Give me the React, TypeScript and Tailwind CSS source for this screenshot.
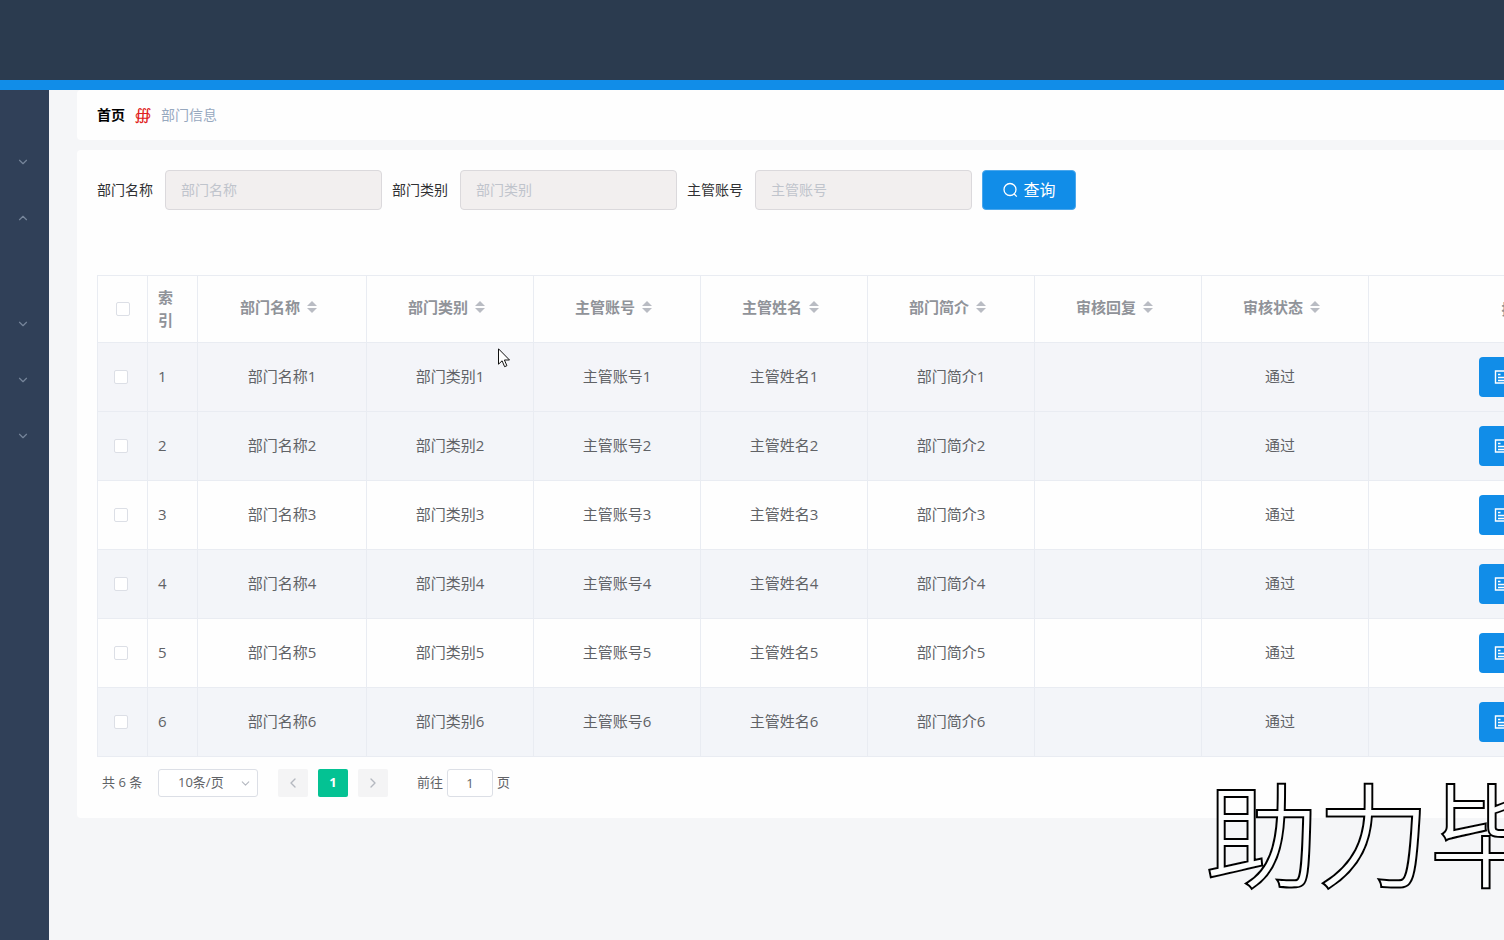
import { useState } from 'react'
import { ChevronDown, ChevronLeft, ChevronRight, ChevronUp } from 'lucide-react'

interface Department {
  id: number
  name: string
  category: string
  account: string
  manager: string
  intro: string
  reply: string
  status: string
}

const DEPARTMENTS: Department[] = [1, 2, 3, 4, 5, 6].map((n) => ({
  id: n,
  name: `部门名称${n}`,
  category: `部门类别${n}`,
  account: `主管账号${n}`,
  manager: `主管姓名${n}`,
  intro: `部门简介${n}`,
  reply: '',
  status: '通过',
}))

const COLUMNS: { key: keyof Department; label: string }[] = [
  { key: 'name',     label: '部门名称' },
  { key: 'category', label: '部门类别' },
  { key: 'account',  label: '主管账号' },
  { key: 'manager',  label: '主管姓名' },
  { key: 'intro',    label: '部门简介' },
  { key: 'reply',    label: '审核回复' },
  { key: 'status',   label: '审核状态' },
]

const FILTERS = ['部门名称', '部门类别', '主管账号']

// which sidebar groups are open; an open group shows one sub item
const MENU = [false, true, false, false, false]

const CELL = 'border-b border-r border-[#e9ecf2]'
const CHECKBOX = 'block size-[14px] appearance-none rounded-[2px] border border-[#dcdfe6] bg-white checked:bg-[#118de8]'

function SortCaret() {
  return (
    <svg className="mx-[7px] h-3 w-[10px]" viewBox="0 0 10 12" fill="#b9bcc3" aria-hidden="true">
      <path d="M5 0 10 5H0z" />
      <path d="M5 12 0 7h10z" />
    </svg>
  )
}

function SearchIcon() {
  return (
    <svg className="size-4" viewBox="0 0 16 16" fill="none" stroke="currentColor" strokeWidth="1.3" aria-hidden="true">
      <circle cx="8" cy="7.5" r="6" />
      <path d="m12.2 12 2.6 2.6" />
    </svg>
  )
}

function TicketIcon() {
  return (
    <svg className="size-[14px]" viewBox="0 0 14 14" fill="none" stroke="currentColor" strokeWidth="1.4" aria-hidden="true">
      <path d="M1.5 1h12v12h-12zM4 4.5h2.5M4 7.5h7M4 10.5h7" />
    </svg>
  )
}

function Sidebar() {
  return (
    <nav className="w-[49px] shrink-0 bg-[#304058] pt-11">
      <ul>
        {MENU.map((open, i) => (
          <li key={i}>
            <button aria-label="菜单" className="flex h-14 w-full items-center justify-end pr-[19px] text-[#76859a]">
              {open
                ? <ChevronUp className="size-[14px]" strokeWidth={2} />
                : <ChevronDown className="size-[14px]" strokeWidth={2} />}
            </button>
            {open && <div className="h-[50px]" />}
          </li>
        ))}
      </ul>
    </nav>
  )
}

function FilterBar() {
  return (
    <form className="flex items-center gap-[10px]" onSubmit={(e) => e.preventDefault()}>
      {FILTERS.map((label) => (
        <label key={label} className="flex items-center gap-3 text-sm text-[#303133]">
          {label}
          <input
            type="text"
            placeholder={label}
            className="h-10 w-[217px] rounded border border-[#dbd9dc] bg-[#f2efef] px-[15px] pb-[2px] text-sm placeholder:text-[#c0c4cc] focus:outline-none"
          />
        </label>
      ))}
      <button type="submit" className="flex h-10 w-[94px] items-center justify-center gap-[5px] rounded border border-[#4ba7ec] bg-[#118de8] text-base text-white">
        <SearchIcon />
        查询
      </button>
    </form>
  )
}

function DepartmentTable() {
  return (
    <table className="w-full table-fixed border-separate border-spacing-0 border-l border-t border-[#e9ecf2] text-[15px] leading-[23px]">
      <colgroup>
        <col className="w-[50px]" />
        <col className="w-[50px]" />
        <col className="w-[169px]" />
        {COLUMNS.slice(1).map((c) => <col key={c.key} className="w-[167px]" />)}
        <col />
      </colgroup>
      <thead className="text-[#909399]">
        <tr className="h-[67px]">
          <th className={CELL}>
            <input type="checkbox" aria-label="全选" className={`${CHECKBOX} mx-auto`} />
          </th>
          <th className={`${CELL} px-[10px] text-left`}>索引</th>
          {COLUMNS.map((c) => (
            <th key={c.key} className={`${CELL} pb-1`}>
              <span className="flex items-center justify-center">
                {c.label}
                <SortCaret />
              </span>
            </th>
          ))}
          <th className={CELL}>操作</th>
        </tr>
      </thead>
      <tbody className="text-[#606266]">
        {DEPARTMENTS.map((row) => (
          <tr key={row.id} className="h-[69px] first:bg-[#f4f5f9] even:bg-[#f3f5f9]">
            <td className={`${CELL} pl-4`}>
              <input type="checkbox" aria-label={row.name} className={CHECKBOX} />
            </td>
            <td className={`${CELL} px-[10px] pb-[2px]`}>{row.id}</td>
            {COLUMNS.map((c) => (
              <td key={c.key} className={`${CELL} pb-[2px] text-center ${c.key === 'status' ? 'pr-[10px]' : ''}`}>
                {row[c.key]}
              </td>
            ))}
            <td className={CELL}>
              <button className="mx-auto flex h-10 w-[76px] items-center justify-center gap-1 rounded bg-[#118de8] text-sm text-white">
                <TicketIcon />
                详情
              </button>
            </td>
          </tr>
        ))}
      </tbody>
    </table>
  )
}

function Pagination() {
  const [page, setPage] = useState('1')

  return (
    <div className="flex items-center px-[5px] pt-3 text-[13px] text-[#606266]">
      <span className="w-14">共 6 条</span>
      <div className="relative">
        <select aria-label="每页条数" className="h-7 w-[100px] appearance-none rounded-[3px] border border-[#dcdfe6] bg-white pl-[19px] focus:outline-none">
          <option>10条/页</option>
        </select>
        <ChevronDown className="pointer-events-none absolute right-[6px] top-2 size-[13px] text-[#b4b8c0]" />
      </div>
      <div className="ml-5 flex gap-[10px]">
        <button aria-label="上一页" className="flex h-7 w-[30px] items-center justify-center rounded-[2px] bg-[#f4f4f5] text-[#b4b8bf]">
          <ChevronLeft className="size-4" />
        </button>
        <button className="h-7 w-[30px] rounded-[2px] bg-[#04c293] font-bold text-white">1</button>
        <button aria-label="下一页" className="flex h-7 w-[30px] items-center justify-center rounded-[2px] bg-[#f4f4f5] text-[#b4b8bf]">
          <ChevronRight className="size-4" />
        </button>
      </div>
      <label className="ml-[29px] flex items-center gap-1">
        前往
        <input
          type="text"
          value={page}
          onChange={(e) => setPage(e.target.value)}
          className="h-7 w-[46px] rounded-[3px] border border-[#dcdfe6] bg-white text-center focus:outline-none"
        />
        页
      </label>
    </div>
  )
}

function Pointer() {
  return (
    <svg className="pointer-events-none absolute left-[498px] top-[348px] h-5 w-[13px]" viewBox="0 0 13 20" fill="#fff" stroke="#111" aria-hidden="true">
      <path d="M.5.8v15.4l3.6-3.4 2.5 5.9 2.3-1-2.5-5.7h5.1z" />
    </svg>
  )
}

export default function App() {
  return (
    <div className="relative flex min-h-screen flex-col overflow-hidden bg-[#f5f6f8] font-['Open_Sans','Noto_Sans_CJK_SC',sans-serif]">
      <header className="h-[90px] shrink-0 border-b-[10px] border-[#118de8] bg-[#2b3b4f]" />
      <div className="flex grow">
        <Sidebar />
        <main className="min-w-[1664px] grow px-7">
          <nav className="flex h-[50px] items-center rounded bg-[#fefefe] px-5 text-sm">
            <a href="#" className="font-bold text-black">首页</a>
            <span className="w-9 text-center font-['DejaVu_Sans'] text-base text-[#e02020]">∰</span>
            <span className="text-[#97a8be]">部门信息</span>
          </nav>
          <section className="mt-[10px] rounded bg-[#fefefe] px-5 pb-[21px] pt-5">
            <FilterBar />
            <div className="mt-[65px]">
              <DepartmentTable />
            </div>
            <Pagination />
          </section>
        </main>
      </div>
      <Pointer />
      <div className="pointer-events-none absolute left-[1206px] top-[774px] whitespace-nowrap font-['Noto_Sans_CJK_SC',sans-serif] text-[112px] font-light leading-[112px] text-[#fcfdfd] [-webkit-text-stroke:4px_#000] [paint-order:stroke_fill]">
        助力毕
      </div>
    </div>
  )
}
